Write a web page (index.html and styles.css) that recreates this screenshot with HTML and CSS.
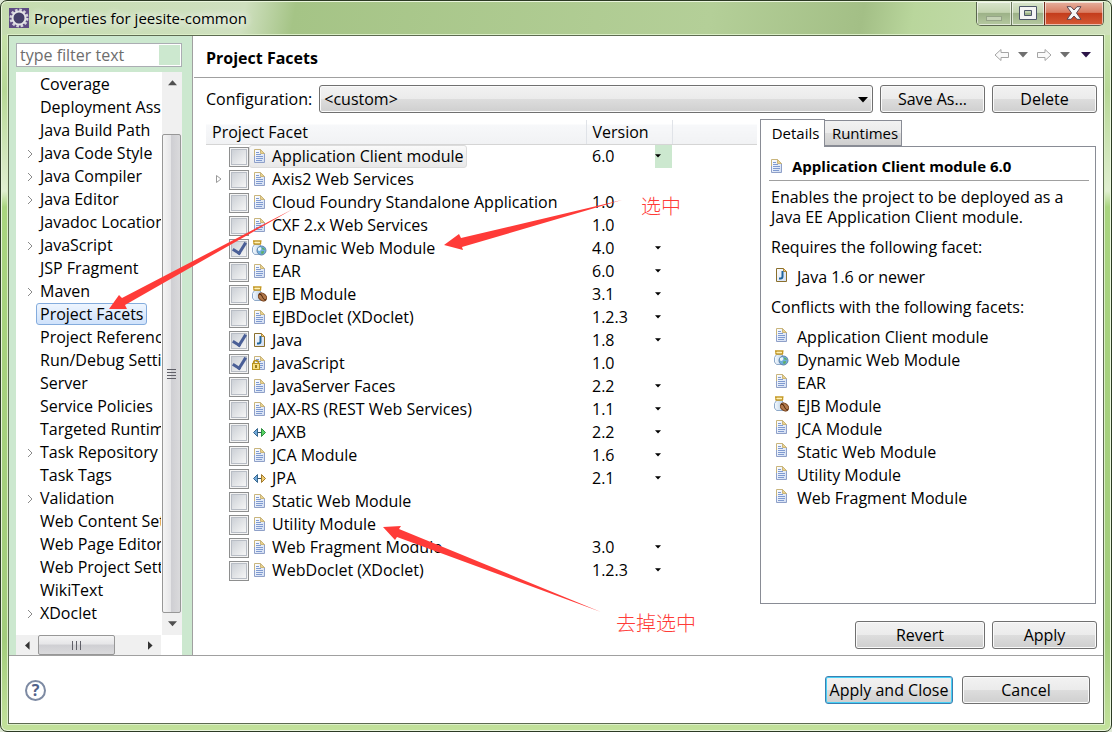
FILE: index.html
```
<!DOCTYPE html>
<html lang="en">
<head>
    <meta charset="UTF-8">
    <meta name="viewport" content="width=device-width, initial-scale=1.0">
    <title>Properties for jeesite-common</title>
    <link rel="stylesheet" href="styles.css">
</head>
<body>
    <svg class="sprite" width="0" height="0" aria-hidden="true">
        <defs>
            <linearGradient id="paper" x1="0" y1="0" x2="1" y2="1">
                <stop offset="0" stop-color="#ffffff"/>
                <stop offset="1" stop-color="#cfdcf2"/>
            </linearGradient>
            <linearGradient id="glass" x1="0" y1="0" x2="1" y2="0">
                <stop offset="0" stop-color="#f6fbff"/>
                <stop offset="1" stop-color="#b9cfe6"/>
            </linearGradient>
            <symbol id="doc" viewBox="0 0 16 16">
                <path d="M2.500 1.500H8.500L12.500 5.500V14.500H2.500Z" fill="url(#paper)"/>
                <path d="M2.500 9V1.500H8.500L12.500 5.500" fill="none" stroke="#c9b57c"/>
                <path d="M2.500 8V14.500H12.500V5.500" fill="none" stroke="#8fa0c8"/>
                <path d="M8.500 1.500V5.500H12.500Z" fill="#ecd38c" stroke="#c9b57c"/>
                <path d="M4 4.500H7M4 6.500H9M4 8.500H11M4 10.500H11M4 12.500H10" stroke="#7f9ad0"/>
            </symbol>
            <symbol id="java" viewBox="0 0 16 16">
                <path d="M2.500 1.500H9.500L12.500 4.500V14.500H2.500Z" fill="url(#paper)" stroke="#8a6f2c"/>
                <path d="M9.500 1.500V4.500H12.500Z" fill="#ecd38c" stroke="#b48a36"/>
                <path d="M8.500 4V9.500Q8.500 11.500 6.500 11.500H5" fill="none" stroke="#20659c" stroke-width="2"/>
            </symbol>
            <symbol id="jar" viewBox="0 0 16 16">
                <path d="M2.500 4.500L.5 7.500V12L2.500 14.500H9V6L7.500 4.500Z" fill="url(#glass)" stroke="#8ea9c9"/>
                <path d="M1 1H9.500M1.500 4H9M2 1V4M8.500 1V4" stroke="#c69a24" stroke-width="1.500"/>
                <path d="M2.500 2.500H8" stroke="#fff3b5"/>
            </symbol>
            <symbol id="web" viewBox="0 0 16 16">
                <use href="#jar"/>
                <circle cx="9.500" cy="10.500" r="4.500" fill="#6eaedb" stroke="#6383a9"/>
                <path d="M6 8L8.500 7L9.500 9L8 11L6 10.500Z" fill="#e8f5fb"/>
                <path d="M9.500 7.500L12 8L13 10L10.500 9.500ZM9 11.500L12 11L11.500 13.500L9.500 14Z" fill="#5fae62"/>
            </symbol>
            <symbol id="ejb" viewBox="0 0 16 16">
                <use href="#jar"/>
                <g transform="rotate(40 10.500 11)">
                    <ellipse cx="10.500" cy="11" rx="4.500" ry="3.500" fill="#b37a4c" stroke="#74401c"/>
                    <path d="M6 11Q8.500 9.500 10.500 11T15 11" fill="none" stroke="#4b2409"/>
                </g>
            </symbol>
            <symbol id="lockdoc" viewBox="0 0 16 16">
                <use href="#doc"/>
                <path d="M1.500 9V8Q1.500 5.500 4 5.500T6.500 8V9" fill="none" stroke="#b8921f" stroke-width="1.500"/>
                <rect x="0.500" y="8.500" width="7" height="6" fill="#f7df82" stroke="#b8921f"/>
                <path d="M4 10V13" stroke="#7b5c05" stroke-width="1.500"/>
            </symbol>
            <symbol id="arrows" viewBox="0 0 16 16">
                <path d="M5 8.500H10" stroke="#2f5168"/>
                <path d="M1.500 8.500L5.500 4.500V12.500Z" fill="#72a8da" stroke="#37688f"/>
                <path d="M13.500 8.500L9.500 4.500V12.500Z" fill="#59d264" stroke="#2c8e3d"/>
            </symbol>
            <symbol id="arrows-jpa" viewBox="0 0 16 16">
                <path d="M5 8.500H10" stroke="#2f5168"/>
                <path d="M1.500 8.500L5.500 4.500V12.500Z" fill="#72a8da" stroke="#37688f"/>
                <path d="M13.500 8.500L9.500 4.500V12.500Z" fill="#f0cd72" stroke="#a27a2c"/>
            </symbol>
            <symbol id="caret" viewBox="0 0 10 6">
                <path d="M0 0H10L5 5.500Z" fill="currentColor"/>
            </symbol>
            <symbol id="chev" viewBox="0 0 6 10">
                <path d="M1 1L5 5L1 9" fill="none" stroke="#8a8a8a"/>
            </symbol>
        </defs>
    </svg>

    <div class="window">
        <header class="titlebar">
            <svg class="app-icon" viewBox="0 0 20 20">
                <rect width="20" height="20" fill="#5d4b83"/>
                <circle cx="10" cy="10" r="8" fill="none" stroke="#d5d5dc" stroke-width="3" stroke-dasharray="2.500 1.690"/>
                <circle cx="10" cy="10" r="6.500" fill="#46416a" stroke="#e4e4e6" stroke-width="2"/>
            </svg>
            <h1>Properties for jeesite-common</h1>
            <div class="win-buttons">
                <button class="win-min" aria-label="Minimize" disabled>
                    <svg width="18" height="14"><rect x="1.500" y="7.500" width="15" height="4" fill="#c6d3b6" stroke="#95a487"/></svg>
                </button>
                <button class="win-max" aria-label="Maximize">
                    <svg width="18" height="14"><path d="M.5 .5H17.500V13.500H.5ZM5.500 4.500V9.500H12.500V4.500Z" fill="#f4f4f4" stroke="#4c5568" fill-rule="evenodd"/></svg>
                </button>
                <button class="win-close" aria-label="Close">
                    <svg width="16" height="14"><path d="M1 .7H5L8 4L11 .7H15L10.500 7L15 13.300H11L8 10L5 13.300H1L5.500 7Z" fill="#f6f6f6" stroke="#5b4650"/></svg>
                </button>
            </div>
        </header>

        <div class="client">
            <aside class="sidebar">
                <div class="filter">
                    <input type="text" placeholder="type filter text" aria-label="type filter text">
                </div>
                <div class="tree">
                    <ul>
                        <li><a href="#">Coverage</a></li>
                        <li><a href="#">Deployment Assembly</a></li>
                        <li><a href="#">Java Build Path</a></li>
                        <li><svg><use href="#chev"/></svg><a href="#">Java Code Style</a></li>
                        <li><svg><use href="#chev"/></svg><a href="#">Java Compiler</a></li>
                        <li><svg><use href="#chev"/></svg><a href="#">Java Editor</a></li>
                        <li><a href="#">Javadoc Location</a></li>
                        <li><svg><use href="#chev"/></svg><a href="#">JavaScript</a></li>
                        <li><a href="#">JSP Fragment</a></li>
                        <li><svg><use href="#chev"/></svg><a href="#">Maven</a></li>
                        <li><a href="#" class="selected">Project Facets</a></li>
                        <li><a href="#">Project References</a></li>
                        <li><a href="#">Run/Debug Settings</a></li>
                        <li><a href="#">Server</a></li>
                        <li><a href="#">Service Policies</a></li>
                        <li><a href="#">Targeted Runtimes</a></li>
                        <li><svg><use href="#chev"/></svg><a href="#">Task Repository</a></li>
                        <li><a href="#">Task Tags</a></li>
                        <li><svg><use href="#chev"/></svg><a href="#">Validation</a></li>
                        <li><a href="#">Web Content Settings</a></li>
                        <li><a href="#">Web Page Editor</a></li>
                        <li><a href="#">Web Project Settings</a></li>
                        <li><a href="#">WikiText</a></li>
                        <li><svg><use href="#chev"/></svg><a href="#">XDoclet</a></li>
                    </ul>
                    <div class="vscroll">
                        <button aria-label="Scroll up"><svg viewBox="0 0 10 6"><path d="M0 5.500L5 0L10 5.500Z"/></svg></button>
                        <div class="vthumb"><i></i><i></i><i></i><i></i></div>
                        <button aria-label="Scroll down"><svg viewBox="0 0 10 6"><path d="M0 0H10L5 5.500Z"/></svg></button>
                    </div>
                    <div class="hscroll">
                        <button aria-label="Scroll left"><svg viewBox="0 0 6 10"><path d="M5.500 0V10L0 5Z"/></svg></button>
                        <div class="hthumb"><i></i><i></i><i></i></div>
                        <button aria-label="Scroll right"><svg viewBox="0 0 6 10"><path d="M0 0V10L5.500 5Z"/></svg></button>
                    </div>
                </div>
            </aside>

            <main class="page">
                <div class="page-head">
                    <h2>Project Facets</h2>
                    <nav class="history">
                        <button aria-label="Back"><svg width="16" height="14" viewBox="0 0 16 14"><path d="M1 7L7 1.500V4.500H14.500V9.500H7V12.500Z" fill="#fafafa" stroke="#a5a5a5"/></svg></button>
                        <button aria-label="Back history"><svg width="10" height="6"><use href="#caret"/></svg></button>
                        <button aria-label="Forward"><svg width="16" height="14" viewBox="0 0 16 14"><path d="M15 7L9 1.500V4.500H1.500V9.500H9V12.500Z" fill="#fafafa" stroke="#a5a5a5"/></svg></button>
                        <button aria-label="Forward history"><svg width="10" height="6"><use href="#caret"/></svg></button>
                        <button class="menu" aria-label="Menu"><svg width="10" height="6"><use href="#caret"/></svg></button>
                    </nav>
                </div>

                <div class="config">
                    <label for="configuration">Configuration:</label>
                    <div class="combo">
                        <select id="configuration">
                            <option>&lt;custom&gt;</option>
                        </select>
                        <svg width="10" height="6"><use href="#caret"/></svg>
                    </div>
                    <button class="btn">Save As...</button>
                    <button class="btn">Delete</button>
                </div>

                <div class="columns">
                    <table class="facets">
                        <colgroup>
                            <col>
                            <col class="col-version">
                            <col class="col-rest">
                        </colgroup>
                        <thead>
                            <tr><th>Project Facet</th><th>Version</th><th></th></tr>
                        </thead>
                        <tbody>
                            <tr class="current">
                                <td><div class="facet"><input type="checkbox" id="f1"><label for="f1"><svg><use href="#doc"/></svg>Application Client module</label></div></td>
                                <td><div class="version">6.0<button aria-label="Change version"><svg><use href="#caret"/></svg></button></div></td><td></td>
                            </tr>
                            <tr>
                                <td><div class="facet"><svg class="twisty" viewBox="0 0 6 10"><path d="M.5 1.500V8.500L5 5Z" fill="#fff" stroke="#999"/></svg><input type="checkbox" id="f2"><label for="f2"><svg><use href="#doc"/></svg>Axis2 Web Services</label></div></td>
                                <td></td><td></td>
                            </tr>
                            <tr>
                                <td><div class="facet"><input type="checkbox" id="f3"><label for="f3"><svg><use href="#doc"/></svg>Cloud Foundry Standalone Application</label></div></td>
                                <td><div class="version">1.0</div></td><td></td>
                            </tr>
                            <tr>
                                <td><div class="facet"><input type="checkbox" id="f4"><label for="f4"><svg><use href="#doc"/></svg>CXF 2.x Web Services</label></div></td>
                                <td><div class="version">1.0</div></td><td></td>
                            </tr>
                            <tr>
                                <td><div class="facet"><input type="checkbox" id="f5" checked><label for="f5"><svg><use href="#web"/></svg>Dynamic Web Module</label></div></td>
                                <td><div class="version">4.0<button aria-label="Change version"><svg><use href="#caret"/></svg></button></div></td><td></td>
                            </tr>
                            <tr>
                                <td><div class="facet"><input type="checkbox" id="f6"><label for="f6"><svg><use href="#doc"/></svg>EAR</label></div></td>
                                <td><div class="version">6.0<button aria-label="Change version"><svg><use href="#caret"/></svg></button></div></td><td></td>
                            </tr>
                            <tr>
                                <td><div class="facet"><input type="checkbox" id="f7"><label for="f7"><svg><use href="#ejb"/></svg>EJB Module</label></div></td>
                                <td><div class="version">3.1<button aria-label="Change version"><svg><use href="#caret"/></svg></button></div></td><td></td>
                            </tr>
                            <tr>
                                <td><div class="facet"><input type="checkbox" id="f8"><label for="f8"><svg><use href="#doc"/></svg>EJBDoclet (XDoclet)</label></div></td>
                                <td><div class="version">1.2.3<button aria-label="Change version"><svg><use href="#caret"/></svg></button></div></td><td></td>
                            </tr>
                            <tr>
                                <td><div class="facet"><input type="checkbox" id="f9" checked><label for="f9"><svg><use href="#java"/></svg>Java</label></div></td>
                                <td><div class="version">1.8<button aria-label="Change version"><svg><use href="#caret"/></svg></button></div></td><td></td>
                            </tr>
                            <tr>
                                <td><div class="facet"><input type="checkbox" id="f10" checked><label for="f10"><svg><use href="#lockdoc"/></svg>JavaScript</label></div></td>
                                <td><div class="version">1.0</div></td><td></td>
                            </tr>
                            <tr>
                                <td><div class="facet"><input type="checkbox" id="f11"><label for="f11"><svg><use href="#doc"/></svg>JavaServer Faces</label></div></td>
                                <td><div class="version">2.2<button aria-label="Change version"><svg><use href="#caret"/></svg></button></div></td><td></td>
                            </tr>
                            <tr>
                                <td><div class="facet"><input type="checkbox" id="f12"><label for="f12"><svg><use href="#doc"/></svg>JAX-RS (REST Web Services)</label></div></td>
                                <td><div class="version">1.1<button aria-label="Change version"><svg><use href="#caret"/></svg></button></div></td><td></td>
                            </tr>
                            <tr>
                                <td><div class="facet"><input type="checkbox" id="f13"><label for="f13"><svg><use href="#arrows"/></svg>JAXB</label></div></td>
                                <td><div class="version">2.2<button aria-label="Change version"><svg><use href="#caret"/></svg></button></div></td><td></td>
                            </tr>
                            <tr>
                                <td><div class="facet"><input type="checkbox" id="f14"><label for="f14"><svg><use href="#doc"/></svg>JCA Module</label></div></td>
                                <td><div class="version">1.6<button aria-label="Change version"><svg><use href="#caret"/></svg></button></div></td><td></td>
                            </tr>
                            <tr>
                                <td><div class="facet"><input type="checkbox" id="f15"><label for="f15"><svg><use href="#arrows-jpa"/></svg>JPA</label></div></td>
                                <td><div class="version">2.1<button aria-label="Change version"><svg><use href="#caret"/></svg></button></div></td><td></td>
                            </tr>
                            <tr>
                                <td><div class="facet"><input type="checkbox" id="f16"><label for="f16"><svg><use href="#doc"/></svg>Static Web Module</label></div></td>
                                <td></td><td></td>
                            </tr>
                            <tr>
                                <td><div class="facet"><input type="checkbox" id="f17"><label for="f17"><svg><use href="#doc"/></svg>Utility Module</label></div></td>
                                <td></td><td></td>
                            </tr>
                            <tr>
                                <td><div class="facet"><input type="checkbox" id="f18"><label for="f18"><svg><use href="#doc"/></svg>Web Fragment Module</label></div></td>
                                <td><div class="version">3.0<button aria-label="Change version"><svg><use href="#caret"/></svg></button></div></td><td></td>
                            </tr>
                            <tr>
                                <td><div class="facet"><input type="checkbox" id="f19"><label for="f19"><svg><use href="#doc"/></svg>WebDoclet (XDoclet)</label></div></td>
                                <td><div class="version">1.2.3<button aria-label="Change version"><svg><use href="#caret"/></svg></button></div></td><td></td>
                            </tr>
                        </tbody>
                    </table>

                    <section class="info">
                        <div class="tabs" role="tablist">
                            <button class="tab active" role="tab" aria-selected="true">Details</button>
                            <button class="tab" role="tab" aria-selected="false">Runtimes</button>
                        </div>
                        <div class="details">
                            <h3><svg><use href="#doc"/></svg>Application Client module 6.0</h3>
                            <p>Enables the project to be deployed as a Java EE Application Client module.</p>
                            <p>Requires the following facet:</p>
                            <ul>
                                <li><svg><use href="#java"/></svg>Java 1.6 or newer</li>
                            </ul>
                            <p>Conflicts with the following facets:</p>
                            <ul>
                                <li><svg><use href="#doc"/></svg>Application Client module</li>
                                <li><svg><use href="#web"/></svg>Dynamic Web Module</li>
                                <li><svg><use href="#doc"/></svg>EAR</li>
                                <li><svg><use href="#ejb"/></svg>EJB Module</li>
                                <li><svg><use href="#doc"/></svg>JCA Module</li>
                                <li><svg><use href="#doc"/></svg>Static Web Module</li>
                                <li><svg><use href="#doc"/></svg>Utility Module</li>
                                <li><svg><use href="#doc"/></svg>Web Fragment Module</li>
                            </ul>
                        </div>
                    </section>
                </div>

                <div class="page-actions">
                    <button class="btn wide">Revert</button>
                    <button class="btn">Apply</button>
                </div>
            </main>

            <footer class="dialog-footer">
                <button class="help" aria-label="Help">?</button>
                <button class="btn wide primary">Apply and Close</button>
                <button class="btn wide">Cancel</button>
            </footer>
        </div>

        <!-- red notes over the dialog -->
        <svg class="notes" width="1112" height="732" aria-hidden="true">
            <path d="M109 309L119 295L122 298L293 209L125 305L127 309Z"/>
            <path d="M444 245L459 234L461 238L622 200L462 247L463 250Z"/>
            <path d="M383 527L401 526L399 529L601 612L397 537L395 540Z"/>
        </svg>
        <span class="note note-check" lang="zh">选中</span>
        <span class="note note-uncheck" lang="zh">去掉选中</span>
    </div>
</body>
</html>
```
FILE: styles.css
```
* {
    box-sizing: border-box;
}
body {
    margin: 0;
    font-family: "Open Sans", "Noto Sans CJK SC", sans-serif;
    font-size: 16px;
    line-height: 20px;
    color: #000;
    background: #dfe9d6;
}
button, input, select {
    font: inherit;
    color: inherit;
    margin: 0;
}
button {
    padding: 0;
    border: none;
    background: none;
}
ul {
    list-style: none;
    margin: 0;
    padding: 0;
}
a {
    color: inherit;
    text-decoration: none;
}
.sprite {
    position: absolute;
}

/* window frame */
.window {
    position: relative;
    display: flex;
    flex-direction: column;
    min-height: 100vh;
    padding: 0 7px 7px;
    border: 1px solid #2c3a24;
    border-radius: 7px;
    box-shadow: inset 0 0 0 1px #e9f5dc;
    background: linear-gradient(#cfe6b4, #b7d896 90px, #e0efd0 190px, #a9d57f 206px, #a3cd7c 640px, #c3e29c);
}
.titlebar {
    display: flex;
    align-items: center;
    height: 33px;
    margin: 1px -6px 0;
    padding: 0 6px;
    border-radius: 6px 6px 0 0;
    background: linear-gradient(100deg, #c5dcaf, #cfe0bf 240px, #a5c486 290px, #b4cf98 700px, #a3bf86 850px, #b9d69c 900px, #cfe0bb);
}
.titlebar h1 {
    flex: 1;
    margin: 0 0 2px 5px;
    font-size: 15px;
    font-weight: 400;
    text-shadow: 0 0 8px #fff, 0 0 8px #fff;
}
.app-icon {
    width: 20px;
    height: 20px;
    margin: 0 0 2px 1px;
}
.win-buttons {
    display: flex;
    align-self: flex-start;
    height: 24px;
    border: 1px solid #5a664f;
    border-top: none;
    border-radius: 0 0 5px 5px;
    overflow: hidden;
}
.win-buttons button {
    width: 33px;
    display: flex;
    align-items: center;
    justify-content: center;
    padding-bottom: 2px;
    border-left: 1px solid #6b7a5e;
    box-shadow: inset 0 0 0 1px rgba(255, 255, 255, 0.6);
    background: linear-gradient(#d8e4cc, #c3d4b0 45%, #9db288 50%, #b5c9a0);
}
.win-buttons .win-min {
    width: 34px;
    border-left: none;
    padding: 4px 0 0;
}
.win-buttons .win-close {
    width: 59px;
    border-color: #702a1a;
    background: linear-gradient(#e5b09e, #d97d62 45%, #c43d1c 50%, #d55a35);
}

.client {
    flex: 1;
    display: grid;
    grid-template-columns: 184px 1fr;
    grid-template-rows: 1fr auto;
    border: 1px solid #5d6b51;
    box-shadow: 0 0 0 1px #dcefc8;
    background: #fff;
}

/* left tree */
.sidebar {
    display: flex;
    flex-direction: column;
    gap: 5px;
    padding: 7px 10px 0 7px;
    border-right: 1px solid #a0a0a0;
    background: #cce8cf;
}
.filter {
    display: flex;
    height: 24px;
    padding: 1px;
    border: 1px solid #abadb3;
    background: linear-gradient(#cce8cf, #cce8cf) right 1px center / 21px 20px no-repeat #fff;
}
.filter input {
    width: 100%;
    padding: 0 2px;
    border: none;
    outline: none;
    background: none;
}
.filter input::placeholder {
    color: #6d6d6d;
    opacity: 1;
}
.tree {
    flex: 1;
    display: grid;
    grid-template-columns: 1fr 20px;
    grid-template-rows: 1fr 20px;
    background: #fff;
}
.tree ul {
    overflow: hidden;
    margin-right: 1px;
}
.tree li {
    display: flex;
    align-items: center;
    height: 23px;
    padding-left: 20px;
    white-space: nowrap;
}
.tree li svg {
    flex: none;
    width: 6px;
    height: 10px;
    margin: 2px 3px 0 -9px;
}
.tree li a {
    padding: 0 3px;
    border: 1px solid transparent;
    border-radius: 3px;
}
.tree li .selected {
    border-color: #84acdd;
    background: linear-gradient(#eef5fe, #cfe2fb);
}
.vscroll {
    display: flex;
    flex-direction: column;
    background: #f0f0f0;
}
.vscroll button {
    height: 22px;
}
.vscroll button:first-child {
    height: 62px;
    padding-bottom: 40px;
}
.vscroll svg {
    display: block;
    width: 9px;
    height: 6px;
    margin: auto;
    fill: #505050;
}
.vthumb {
    flex: 1;
    display: flex;
    flex-direction: column;
    align-items: center;
    justify-content: center;
    gap: 2px;
    margin-right: 1px;
    border: 1px solid #979797;
    border-radius: 2px;
    background: linear-gradient(90deg, #f4f4f4, #e6e6e8 45%, #cfcfd3 50%, #dadadc);
}
.vthumb i {
    width: 9px;
    height: 1px;
    background: #606068;
}
.hscroll {
    display: flex;
    align-items: stretch;
    margin-right: 1px;
    background: #f0f0f0;
}
.hscroll button {
    width: 22px;
    flex: none;
}
.hscroll button:last-child {
    margin-left: auto;
}
.hscroll svg {
    display: block;
    width: 5px;
    height: 9px;
    margin: auto;
    fill: #333;
}
.hthumb {
    display: flex;
    align-items: center;
    justify-content: center;
    gap: 3px;
    width: 77px;
    border: 1px solid #979797;
    border-radius: 2px;
    background: linear-gradient(#f4f4f4, #e6e6e8 45%, #cfcfd3 50%, #dadadc);
}
.hthumb i {
    width: 1px;
    height: 9px;
    background: #606068;
}

/* property page */
.page {
    display: flex;
    flex-direction: column;
    min-width: 0;
}
.page-head {
    display: flex;
    align-items: center;
    justify-content: space-between;
    height: 42px;
    margin-left: 1px;
    padding: 0 12px;
    border-bottom: 1px solid #a0a0a0;
}
.page-head h2 {
    margin: 3px 0 0;
    font-size: 16px;
    font-weight: 700;
}
.history {
    display: flex;
    align-items: center;
    gap: 8px;
    margin-bottom: 4px;
    color: #6f6f6f;
}
.history button {
    display: flex;
}
.history .menu {
    margin-left: 3px;
    color: #2c1548;
}
.config {
    display: flex;
    align-items: center;
    gap: 7px;
    padding: 7px 6px 0 13px;
}
.combo {
    position: relative;
    flex: 1;
    display: flex;
}
.combo select {
    width: 100%;
    height: 28px;
    padding: 0 4px;
    appearance: none;
    border: 1px solid #707070;
    border-radius: 3px;
    box-shadow: inset 0 0 0 1px #fafafa;
    background: linear-gradient(#f2f2f2, #ebebeb 49%, #dddddd 50%, #cfcfcf);
}
.combo svg {
    position: absolute;
    right: 5px;
    top: 12px;
    pointer-events: none;
}
.btn {
    width: 105px;
    height: 28px;
    border: 1px solid #707070;
    border-radius: 3px;
    box-shadow: inset 0 0 0 1px #fafafa;
    background: linear-gradient(#f2f2f2, #ebebeb 49%, #dddddd 50%, #cfcfcf);
    white-space: nowrap;
}
.btn.wide {
    width: 130px;
}
.columns {
    flex: 1;
    display: grid;
    grid-template-columns: 1fr 336px;
    gap: 3px;
    align-items: stretch;
    padding: 6px 7px 0 13px;
}

/* facet table */
.facets {
    align-self: start;
    width: 100%;
    margin-top: 1px;
    border-collapse: collapse;
    table-layout: fixed;
}
.facets .col-version {
    width: 86px;
}
.facets .col-rest {
    width: 85px;
}
.facets th {
    height: 24px;
    padding: 0 6px;
    border-right: 1px solid #e0e3e8;
    border-bottom: 1px solid #d5d5d5;
    background: linear-gradient(#fff 4px, #f7f8fa 5px, #f1f2f4);
    font-weight: 400;
    text-align: left;
}
.facets th:last-child {
    border-right: none;
}
.facets td {
    height: 23px;
    padding: 0;
}
.facet {
    display: flex;
    align-items: center;
    height: 23px;
    padding-left: 23px;
}
.facet .twisty {
    width: 6px;
    height: 10px;
    margin: 0 7px 0 -13px;
}
.facet input {
    flex: none;
    display: flex;
    align-items: center;
    justify-content: center;
    width: 20px;
    height: 20px;
    margin-top: 1px;
    appearance: none;
    border: 1px solid #8e8f8f;
    background: #f4f4f4;
}
.facet input::before {
    content: "";
    width: 14px;
    height: 14px;
    border: 1px solid #b8bdc5;
    background: linear-gradient(135deg, #ccd0d6, #f6f6f6);
}
.facet input:checked::after {
    content: "";
    position: absolute;
    width: 6px;
    height: 11px;
    margin-bottom: 3px;
    border: solid #4a5f97;
    border-width: 0 3px 3px 0;
    transform: rotate(32deg);
}
.facet label {
    display: flex;
    align-items: center;
    height: 23px;
    padding: 0 2px;
    border: 1px solid transparent;
    border-radius: 3px;
    white-space: nowrap;
}
.facet label svg {
    width: 16px;
    height: 16px;
    margin-right: 4px;
}
.current .facet label {
    border-color: #dcdcdc;
    background: linear-gradient(#fafafa, #e8e8e8);
}
.version {
    display: flex;
    justify-content: space-between;
    height: 23px;
    padding-left: 6px;
    line-height: 23px;
}
.version button {
    width: 17px;
}
.version button svg {
    display: block;
    width: 6px;
    height: 4px;
}
.current .version button {
    background: #cce8cf;
}

/* details */
.info {
    display: flex;
    flex-direction: column;
}
.tabs {
    display: flex;
    align-items: flex-end;
}
.tab {
    height: 26px;
    width: 77px;
    padding: 0 0 0 4px;
    border: 1px solid #898c95;
    border-left: none;
    font-size: 15px;
    background: linear-gradient(#f2f2f2, #ebebeb 49%, #dddddd 50%, #cfcfcf);
}
.tab.active {
    height: 28px;
    width: 65px;
    margin-bottom: -1px;
    padding: 0 0 2px 6px;
    border-left: 1px solid #898c95;
    border-bottom: none;
    background: #fff;
    z-index: 1;
}
.details {
    flex: 1;
    padding: 7px 6px 0 8px;
    border: 1px solid #898c95;
}
.details h3 {
    display: flex;
    align-items: center;
    height: 27px;
    margin: 0 0 6px;
    padding-bottom: 3px;
    border-bottom: 1px solid #a0a0a0;
    font-size: 15px;
}
.details svg {
    width: 16px;
    height: 16px;
    margin-right: 7px;
}
.details p {
    margin: 0 0 10px;
    padding: 0 20px 0 2px;
}
.details ul {
    margin-bottom: 10px;
    padding-left: 5px;
}
.details li {
    display: flex;
    height: 23px;
}
.details li:only-child {
    height: 20px;
}
.page-actions {
    display: flex;
    justify-content: flex-end;
    gap: 7px;
    padding: 17px 6px 6px 0;
}

.dialog-footer {
    grid-column: 1 / -1;
    display: flex;
    align-items: center;
    gap: 9px;
    padding: 20px 13px 19px 16px;
    border-top: 1px solid #a0a0a0;
}
.dialog-footer .btn {
    width: 128px;
}
.dialog-footer .primary {
    border-color: #3c7fb1;
    box-shadow: inset 0 0 0 1px #48d0f5;
}
.help {
    width: 21px;
    height: 21px;
    margin-right: auto;
    border: 2px solid #7d8aa3;
    border-radius: 50%;
    color: #50618a;
    font-weight: 700;
    line-height: 17px;
}

.notes {
    position: absolute;
    left: -1px;
    top: -1px;
    fill: #ff3b38;
    pointer-events: none;
}
.note {
    position: absolute;
    color: #ff3b38;
    font-family: "Noto Sans CJK SC", sans-serif;
    font-size: 20px;
    font-weight: 300;
    line-height: 24px;
}
.note-check {
    left: 640px;
    top: 193px;
}
.note-uncheck {
    left: 615px;
    top: 610px;
}
```
